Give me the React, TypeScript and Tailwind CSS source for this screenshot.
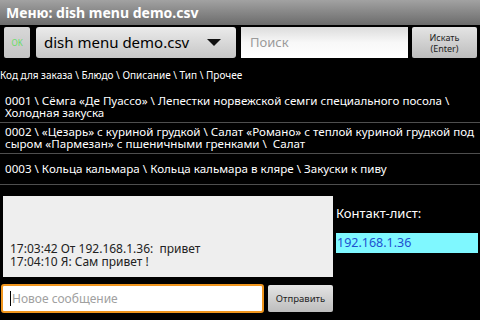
const rows = [
  ['0001 \\ Сёмга «Де Пуассо» \\ Лепестки норвежской семги специального посола \\', 'Холодная закуска'],
  ['0002 \\ «Цезарь» с куриной грудкой \\ Салат «Романо» с теплой куриной грудкой под', 'сыром «Пармезан» с пшеничными гренками \\  Салат'],
  ['0003 \\ Кольца кальмара \\ Кольца кальмара в кляре \\ Закуски к пиву'],
];

const messages = ['17:03:42 От 192.168.1.36:  привет', '17:04:10 Я: Сам привет !'];

export default function App() {
  return (
    <div className="w-[480px] h-[320px] bg-black overflow-hidden flex flex-col text-white" style={{ fontFamily: '"Noto Sans", "Open Sans", sans-serif' }}>
      {/* Title bar */}
      <div className="h-[25px] shrink-0 flex items-center px-[6px] bg-gradient-to-b from-[#a2a2a2] to-[#6c6c6c]">
        <span className="text-[14px] font-bold leading-none">Меню: dish menu demo.csv</span>
      </div>

      {/* Toolbar */}
      <div className="mt-[2px] h-[31px] shrink-0 flex">
        <div className="ml-[4px] w-[26px] rounded-[2px] bg-gradient-to-b from-[#d8d8d8] to-[#c4c4c4] flex items-center justify-center">
          <span className="text-[8px] text-[#66dd66] leading-none">OK</span>
        </div>
        <div className="ml-[6px] w-[200px] rounded-[3px] bg-gradient-to-b from-[#ebebeb] to-[#c6c6c6] flex items-center justify-between pl-[8px] pr-[15px]">
          <span className="text-[15px] text-black leading-none">dish menu demo.csv</span>
          <svg width="14" height="7" viewBox="0 0 14 7">
            <polygon points="0,0 14,0 7,7" fill="#111" />
          </svg>
        </div>
        <div className="ml-[5px] w-[167px] bg-gradient-to-b from-[#dcdcdc] via-[#f8f8f8] to-white flex items-center pl-[9px]">
          <span className="text-[13px] text-[#9a9a9a] leading-none">Поиск</span>
        </div>
        <div className="ml-[4px] w-[65px] rounded-[2px] bg-gradient-to-b from-[#e4e4e4] to-[#bdbdbd] flex flex-col items-center justify-center">
          <span className="text-[9px] text-[#222] leading-[11px]">Искать</span>
          <span className="text-[9px] text-[#222] leading-[11px]">(Enter)</span>
        </div>
      </div>

      {/* Header */}
      <div className="h-[34px] shrink-0 flex items-center">
        <span className="text-[10px] leading-none">Код для заказа \ Блюдо \ Описание \ Тип \ Прочее</span>
      </div>

      {/* Rows */}
      {rows.map((r, i) => (
        <div key={i} className="shrink-0">
          <div className="h-[30px] flex flex-col justify-center px-[5px]">
            {r.map((line, j) => (
              <div key={j} className="text-[11.6px] leading-[12.5px] whitespace-pre">{line}</div>
            ))}
          </div>
          <div className="h-[1px] bg-[#4e4e4e]" />
        </div>
      ))}

      {/* Chat area */}
      <div className="mt-[11px] flex">
        <div className="w-[334px] shrink-0">
          <div className="ml-[3px] w-[330px] h-[81px] bg-[#eeeeee] flex flex-col justify-end pl-[7px] pb-[9px]">
            {messages.map((m) => (
              <div key={m} className="text-[12px] leading-[12.5px] text-[#222] whitespace-pre">{m}</div>
            ))}
          </div>
          <div className="mt-[7px] flex">
            <div className="ml-[1px] w-[263px] h-[29px] rounded-[3px] border-2 border-[#f0961e] bg-white flex items-center pl-[7px]">
              <div className="w-[1px] h-[15px] bg-black mr-[1px]" />
              <span className="text-[12px] text-[#a0a0a0] leading-none">Новое сообщение</span>
            </div>
            <div className="ml-[4px] mt-[1px] w-[65px] h-[27px] rounded-[2px] bg-gradient-to-b from-[#e4e4e4] to-[#bdbdbd] flex items-center justify-center">
              <span className="text-[9.5px] text-[#222] leading-none">Отправить</span>
            </div>
          </div>
        </div>
        <div className="ml-[2px] flex-1 flex flex-col">
          <div className="mt-[10px] text-[13px] leading-[15px]">Контакт-лист:</div>
          <div className="mt-[12px] mr-[2px] h-[20px] bg-[#7ff8ff] flex items-center pl-[1px]">
            <span className="text-[12.5px] text-[#2050d0] leading-none">192.168.1.36</span>
          </div>
        </div>
      </div>
    </div>
  );
}
